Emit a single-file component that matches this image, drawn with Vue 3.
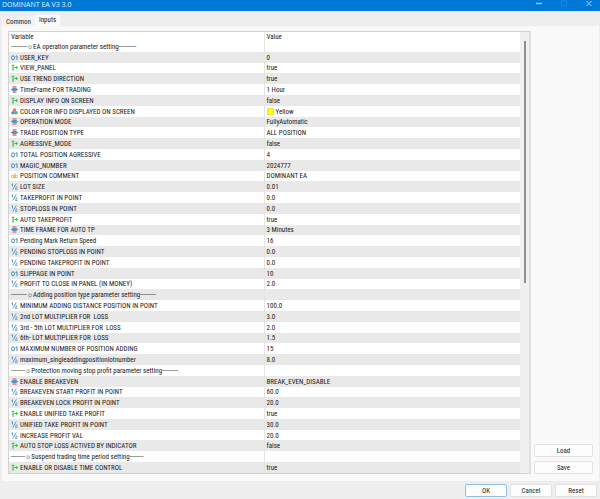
<script setup>
const rows = [
  ['section', '---------☼EA operation parameter setting----------', ''],
  ['int', 'USER_KEY', '0'],
  ['bool', 'VIEW_PANEL', 'true'],
  ['bool', 'USE TREND DIRECTION', 'true'],
  ['enum', 'TimeFrame FOR TRADING', '1 Hour'],
  ['bool', 'DISPLAY INFO ON SCREEN', 'false'],
  ['color', 'COLOR FOR INFO DISPLAYED ON SCREEN', 'Yellow'],
  ['enum', 'OPERATION MODE', 'FullyAutomatic'],
  ['enum', 'TRADE POSITION TYPE', 'ALL POSITION'],
  ['bool', 'AGRESSIVE_MODE', 'false'],
  ['int', 'TOTAL POSITION AGRESSIVE', '4'],
  ['int', 'MAGIC_NUMBER', '2024777'],
  ['string', 'POSITION COMMENT', 'DOMINANT EA'],
  ['double', 'LOT SIZE', '0.01'],
  ['double', 'TAKEPROFIT IN POINT', '0.0'],
  ['double', 'STOPLOSS IN POINT', '0.0'],
  ['bool', 'AUTO TAKEPROFIT', 'true'],
  ['enum', 'TIME FRAME FOR AUTO TP', '3 Minutes'],
  ['int', 'Pending Mark Return Speed', '16'],
  ['double', 'PENDING STOPLOSS IN POINT', '0.0'],
  ['double', 'PENDING TAKEPROFIT IN POINT', '0.0'],
  ['int', 'SLIPPAGE IN POINT', '10'],
  ['double', 'PROFIT TO CLOSE IN PANEL (IN MONEY)', '2.0'],
  ['section', '---------☼Adding position type parameter setting---------', ''],
  ['double', 'MINIMUM ADDING DISTANCE POSITION IN POINT', '100.0'],
  ['double', '2nd LOT MULTIPLIER FOR  LOSS', '3.0'],
  ['double', '3rd - 5th LOT MULTIPLIER FOR  LOSS', '2.0'],
  ['double', '6th- LOT MULTIPLIER FOR  LOSS', '1.5'],
  ['int', 'MAXIMUM NUMBER OF POSITION ADDING', '15'],
  ['double', 'maximum_singleaddingpositionlotnumber', '8.0'],
  ['section', '--------☼Protection moving stop profit parameter setting---------', ''],
  ['enum', 'ENABLE BREAKEVEN', 'BREAK_EVEN_DISABLE'],
  ['double', 'BREAKEVEN START PROFIT IN POINT', '60.0'],
  ['double', 'BREAKEVEN LOCK PROFIT IN POINT', '20.0'],
  ['bool', 'ENABLE UNIFIED TAKE PROFIT', 'true'],
  ['double', 'UNIFIED TAKE PROFIT IN POINT', '30.0'],
  ['double', 'INCREASE PROFIT VAL', '20.0'],
  ['bool', 'AUTO STOP LOSS ACTIVED BY INDICATOR', 'false'],
  ['section', '--------☼Suspend trading time period setting--------', ''],
  ['bool', 'ENABLE OR DISABLE TIME CONTROL', 'true'],
].map(([type, name, value]) => ({ type, name, value }))
</script>

<template>
  <main class="dialog">
    <header class="titlebar">
      <h1>DOMINANT EA V3 3.0</h1>
      <div class="window-buttons">
        <button type="button" aria-label="Minimize">
          <svg viewBox="0 0 8 8"><path d="M1 3.5h6" stroke="#9ccbf0" stroke-width="1.4" /></svg>
        </button>
        <button type="button" aria-label="Maximize" disabled>
          <svg viewBox="0 0 8 8"><rect x="1.5" y="1" width="5" height="5" fill="none" stroke="#1f88dc" /></svg>
        </button>
        <button type="button" aria-label="Close">
          <svg viewBox="0 0 8 8"><path d="M1.5 1l5 5m0-5l-5 5" stroke="#b5d9f5" /></svg>
        </button>
      </div>
    </header>

    <nav class="tabs" role="tablist">
      <button type="button" role="tab" class="tab" aria-selected="false">Common</button>
      <button type="button" role="tab" class="tab active" aria-selected="true">Inputs</button>
    </nav>

    <section class="panel">
      <div class="grid-box">
        <table>
          <thead>
            <tr><th class="name-col">Variable</th><th>Value</th></tr>
          </thead>
          <tbody>
            <tr v-for="row in rows" :key="row.name">
              <td>
                <span class="cell">
                  <svg v-if="row.type === 'int'" class="icon" viewBox="0 0 14 14">
                    <g fill="none" stroke="#3d8fc6" stroke-width="2">
                      <ellipse cx="4" cy="7.5" rx="3" ry="4" />
                      <path d="M9 5l3-1.500V12" />
                    </g>
                  </svg>
                  <svg v-else-if="row.type === 'bool'" class="icon" viewBox="0 0 14 14">
                    <g fill="none" stroke="#2fbd46" stroke-width="1.8">
                      <path d="M4 14V2M1 4.600L4 1.400l3 3.200M4 11c0-3 2-4 4-4h5M10 3.800L13.200 7 10 10.200" />
                    </g>
                  </svg>
                  <svg v-else-if="row.type === 'enum'" class="icon" viewBox="0 0 14 14">
                    <path d="M3 0h8v4H3zM3 10h8v4H3z" fill="#f0948a" />
                    <path d="M0 6h2l1-2h8l1 2h2v2h-2l-1 2H3L2 8H0z" fill="#4c96cb" />
                  </svg>
                  <svg v-else-if="row.type === 'color'" class="icon" viewBox="0 0 14 14">
                    <circle cx="7" cy="4" r="3.500" fill="#ec7468" />
                    <circle cx="4" cy="9.500" r="3.500" fill="#4a94cc" />
                    <circle cx="10" cy="9.500" r="3.500" fill="#48bd57" />
                  </svg>
                  <svg v-else-if="row.type === 'string'" class="icon" viewBox="0 0 14 14">
                    <g fill="none" stroke="#e0a638" stroke-width="1.700">
                      <circle cx="3.400" cy="9" r="2.500" />
                      <path d="M6 5.500V12.500M8 2V12.500" />
                      <circle cx="10.600" cy="9" r="2.500" />
                    </g>
                  </svg>
                  <svg v-else-if="row.type === 'double'" class="icon" viewBox="0 0 14 14">
                    <g fill="none" stroke="#3d8fc6" stroke-width="1.700">
                      <path d="M1 2.600L3 1.500V7M10.500 1L3.500 13M8.500 8.500c1-1.500 4-1 3.500.8-.4 1.200-2.500 1.800-3.500 3.200H13" />
                    </g>
                  </svg>
                  <span class="text">{{ row.name }}</span>
                </span>
              </td>
              <td>
                <span class="cell value">
                  <i v-if="row.type === 'color'" class="swatch"></i>
                  <span class="text">{{ row.value }}</span>
                </span>
              </td>
            </tr>
          </tbody>
        </table>
        <div class="scrollbar"><div class="thumb"></div></div>
      </div>
      <div class="side">
        <button type="button" class="btn">Load</button>
        <button type="button" class="btn">Save</button>
      </div>
    </section>

    <footer class="actions">
      <button type="button" class="btn primary">OK</button>
      <button type="button" class="btn">Cancel</button>
      <button type="button" class="btn">Reset</button>
    </footer>
  </main>
</template>

<style>
body {
  margin: 0;
  background: #eeeeee;
}
</style>

<style scoped>
.dialog {
  display: flex;
  flex-direction: column;
  min-height: 100vh;
  box-sizing: border-box;
  background: #eeeeee;
  color: #222;
  font: 7px/8px "Roboto Condensed", Roboto, "Noto Sans", sans-serif;
}
button {
  font: inherit;
  color: inherit;
  padding: 0;
  margin: 0;
}
.titlebar {
  display: flex;
  justify-content: space-between;
  height: 11px;
  background: #0078d7;
  border-bottom: 1px solid #dbe7f1;
}
h1 {
  margin: 0;
  padding-left: 2px;
  font: 7px/9px "Open Sans", sans-serif;
  color: #e2f1fc;
}
.window-buttons {
  display: flex;
  gap: 17px;
  padding-right: 7px;
}
.window-buttons button {
  width: 8px;
  height: 8px;
  background: none;
  border: 0;
}
.window-buttons svg {
  display: block;
  width: 8px;
  height: 8px;
}
.tabs {
  display: flex;
  align-items: flex-end;
  padding: 3px 3px 0 2px;
}
.tab {
  height: 9px;
  padding: 0 4px;
  border: 0;
  background: #f2f2f2;
}
.tab.active {
  height: 11px;
  padding-bottom: 1px;
  background: #f9f9f9;
}
.panel {
  flex: 1;
  display: flex;
  gap: 3px;
  margin: 0 1px 0 2px;
  padding: 5px 6px 7px;
  background: #f9f9f9;
}
.grid-box {
  flex: 1;
  display: flex;
  border: 1px solid #d2d2d2;
  border-right: 2px solid #e0e0e0;
  background: #fff;
}
table {
  flex: 1;
  border-collapse: separate;
  border-spacing: 0;
  table-layout: fixed;
}
th,
td {
  padding: 1px 0 0 2px;
  text-align: left;
  font-weight: 400;
  vertical-align: middle;
}
th:first-child,
td:first-child {
  border-right: 1px solid #e4e4e4;
}
.name-col {
  width: 50%;
}
tbody tr:nth-child(even) {
  background: #e9e9e9;
}
.cell {
  display: flex;
  align-items: flex-start;
  gap: 2px;
}
.text {
  white-space: pre;
}
.icon {
  flex: none;
  width: 7px;
  height: 7px;
}
.swatch {
  width: 7px;
  height: 7px;
  background: #ffff00;
  outline: 1px solid #e6e640;
  outline-offset: -1px;
}
.scrollbar {
  width: 3px;
  padding: 9px 3px 0;
  background: #f0f0f0;
}
.thumb {
  width: 2px;
  height: 56%;
  margin-left: 1px;
  background: #909090;
}
.side {
  width: 59px;
  display: flex;
  flex-direction: column;
  justify-content: flex-end;
  gap: 4px;
}
.btn {
  height: 13px;
  border: 1px solid #e2e2e2;
  border-radius: 2px;
  background: #fdfdfd;
}
.primary {
  border-color: #8fc0e8;
}
.actions {
  display: flex;
  justify-content: flex-end;
  gap: 3px;
  padding: 3px 3px 2px;
}
.actions .btn {
  width: 42px;
}
</style>
